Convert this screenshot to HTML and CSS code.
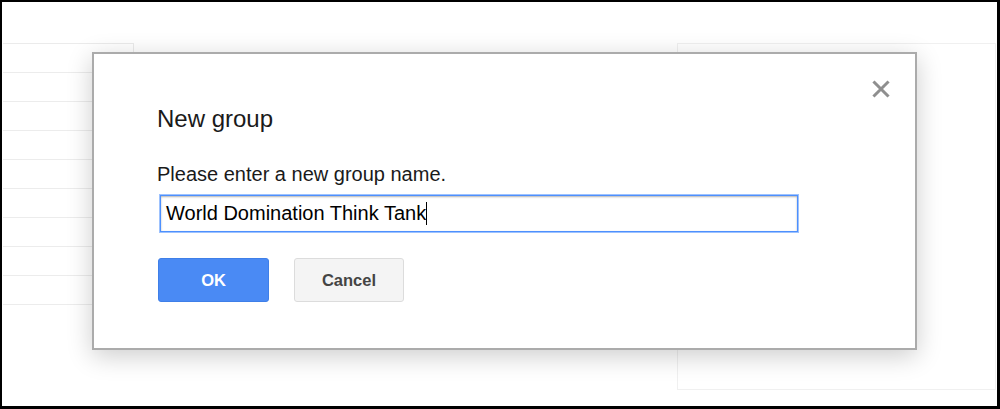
FILE: index.html
```html
<!DOCTYPE html>
<html lang="en">
<head>
<meta charset="utf-8">
<title>New group</title>
<link rel="stylesheet" href="styles.css">
</head>
<body>
<div class="screen">
  <div class="bg">
    <div class="list">
      <div class="row"></div><div class="row"></div><div class="row"></div>
      <div class="row"></div><div class="row"></div><div class="row"></div>
      <div class="row"></div><div class="row"></div><div class="row"></div>
    </div>
    <div class="side"></div>
  </div>

  <div class="dialog" role="dialog" aria-labelledby="dlg-title">
    <button class="close" aria-label="Close">
      <svg width="18" height="18" viewBox="0 0 18 18" aria-hidden="true">
        <path d="M2.5 2.5 L15.5 15.5 M15.5 2.5 L2.5 15.5" stroke="#8f8f8f" stroke-width="3" stroke-linecap="square" fill="none"/>
      </svg>
    </button>
    <h2 class="title" id="dlg-title">New group</h2>
    <p class="prompt">Please enter a new group name.</p>
    <div class="field" role="textbox">World Domination Think Tank<span class="caret"></span></div>
    <div class="actions">
      <button class="btn btn-primary">OK</button>
      <button class="btn btn-default">Cancel</button>
    </div>
  </div>
</div>
</body>
</html>
```
FILE: styles.css
```css
html, body {
  margin: 0;
  padding: 0;
  background: #fff;
}

body {
  font-family: "Liberation Sans", Arial, sans-serif;
}

.screen {
  position: relative;
  width: 1000px;
  height: 409px;
  box-sizing: border-box;
  border-style: solid;
  border-color: #000;
  border-width: 2px 3px 3px 2px;
  background: #fff;
  overflow: hidden;
}

.bg {
  display: flex;
  align-items: flex-start;
  padding-top: 41px;
}

.list {
  width: 131px;
  margin-left: 1px;
  box-sizing: border-box;
  border-top: 1px solid #ebebeb;
  border-right: 1px solid #ebebeb;
}

.row {
  height: 28px;
  border-bottom: 1px solid #ececec;
}

.side {
  margin-left: auto;
  margin-right: 1px;
  width: 319px;
  height: 347px;
  box-sizing: border-box;
  border: 1px solid #f0f0f0;
}

.dialog {
  position: absolute;
  left: 90px;
  top: 50px;
  width: 825px;
  height: 298px;
  box-sizing: border-box;
  border: 2px solid #ababab;
  background: #fff;
  box-shadow: 0 6px 24px rgba(0, 0, 0, 0.2);
  padding: 53px 0 0 63px;
}

.close {
  position: absolute;
  top: 26px;
  right: 25px;
  width: 18px;
  height: 18px;
  padding: 0;
  border: 0;
  background: none;
  display: block;
}

.close svg {
  display: block;
}

.title {
  margin: 0;
  font-size: 24px;
  line-height: 24px;
  font-weight: normal;
  color: #1a1a1a;
}

.prompt {
  margin: 33px 0 0;
  font-size: 20px;
  line-height: 20px;
  color: #1a1a1a;
}

.field {
  margin: 11px 0 0 3px;
  width: 638px;
  height: 37px;
  box-sizing: border-box;
  border: 1px solid #4d90fe;
  box-shadow: inset 0 1px 2px rgba(0, 0, 0, 0.3), 0 0 0 1px rgba(77, 144, 254, 0.55);
  padding: 0 5px;
  font-size: 20px;
  line-height: 35px;
  color: #000;
  white-space: nowrap;
}

.caret {
  display: inline-block;
  width: 1px;
  height: 23px;
  background: #000;
  vertical-align: -5px;
}

.actions {
  display: flex;
  gap: 25px;
  margin: 26px 0 0 1px;
}

.btn {
  height: 44px;
  box-sizing: border-box;
  border-radius: 3px;
  font-family: "Liberation Sans", Arial, sans-serif;
  font-size: 16.5px;
  font-weight: bold;
  padding: 0;
  cursor: default;
}

.btn-primary {
  width: 111px;
  background: #4a8af4;
  border: 1px solid #3f7fe8;
  color: #fff;
}

.btn-default {
  width: 110px;
  background: #f4f4f4;
  border: 1px solid #dcdcdc;
  color: #444;
}
```
